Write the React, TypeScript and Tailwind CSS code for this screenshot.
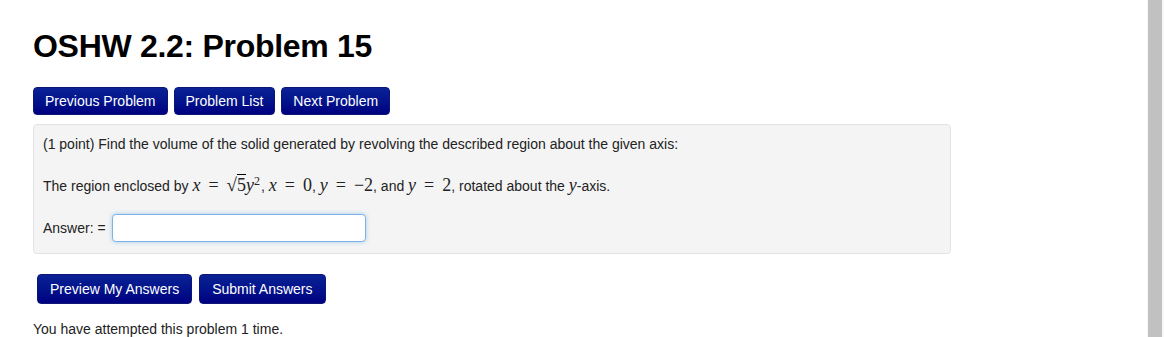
import React from 'react';

const navBtn =
  'h-[28px] rounded-[4px] border border-[#0b1675] bg-gradient-to-b from-[#0b2196] to-[#000080] px-[11px] text-[14px] leading-none text-white';
const subBtn =
  'h-[30px] rounded-[4px] border border-[#0b1675] bg-gradient-to-b from-[#0b2196] to-[#000080] px-[12px] text-[14px] leading-none text-white';

function Mi({ children }: { children: React.ReactNode }) {
  return <span className="italic">{children}</span>;
}

function Eq({ children }: { children: React.ReactNode }) {
  return (
    <span className="whitespace-nowrap font-['Liberation_Serif','DejaVu_Serif',serif] text-[18px] leading-none">
      {children}
    </span>
  );
}

function Op({ children }: { children: React.ReactNode }) {
  return <span className="mx-[8px]">{children}</span>;
}

export default function App() {
  return (
    <div className="relative min-h-[337px] bg-white font-['Liberation_Sans',Arial,sans-serif] text-[#222]">
      <div className="pl-[33px] pt-[28px]">
        <h1 className="text-[32px] font-bold leading-[36px] tracking-[-0.3px] text-black">
          OSHW 2.2: Problem 15
        </h1>

        <div className="mt-[23px] flex gap-[6px]">
          <button className={navBtn}>Previous Problem</button>
          <button className={navBtn}>Problem List</button>
          <button className={navBtn}>Next Problem</button>
        </div>

        <div className="mt-[9px] w-[918px] rounded-[4px] border border-[#e3e3e3] bg-[#f4f4f4] px-[9px] pb-[11px] pt-[10px] text-[14px] leading-[18px]">
          <p>(1 point) Find the volume of the solid generated by revolving the described region about the given axis:</p>

          <p className="mt-[21px] flex items-baseline">
            <span>The region enclosed by&nbsp;</span>
            <Eq>
              <Mi>x</Mi>
              <Op>=</Op>
              <span className="inline-flex items-end">
                <span className="text-[19px] leading-none">√</span>
                <span className="border-t border-black pt-[1px]">5</span>
              </span>
              <Mi>y</Mi>
              <sup className="mr-[1px] text-[12px]">2</sup>
            </Eq>
            <span>,&nbsp;</span>
            <Eq>
              <Mi>x</Mi>
              <Op>=</Op>0
            </Eq>
            <span>,&nbsp;</span>
            <Eq>
              <Mi>y</Mi>
              <Op>=</Op>−2
            </Eq>
            <span>, and&nbsp;</span>
            <Eq>
              <Mi>y</Mi>
              <Op>=</Op>2
            </Eq>
            <span>, rotated about the&nbsp;</span>
            <Eq>
              <Mi>y</Mi>
            </Eq>
            <span>-axis.</span>
          </p>

          <div className="mt-[19px] flex items-center">
            <span>Answer: =</span>
            <input
              className="ml-[6px] h-[28px] w-[254px] rounded-[4px] border border-[#7fb0e6] bg-white shadow-[0_0_4px_rgba(82,168,236,0.5)] outline-none"
              type="text"
            />
          </div>
        </div>

        <div className="ml-[4px] mt-[20px] flex gap-[7px]">
          <button className={subBtn}>Preview My Answers</button>
          <button className={subBtn}>Submit Answers</button>
        </div>

        <p className="mt-[17px] text-[14px] leading-[16px]">You have attempted this problem 1 time.</p>
      </div>

      <div className="absolute right-0 top-0 h-[337px] w-[17px] bg-[#f7f7f7]">
        <div className="ml-[1px] h-full w-[14px] bg-[#c1c1c1]" />
      </div>
    </div>
  );
}
